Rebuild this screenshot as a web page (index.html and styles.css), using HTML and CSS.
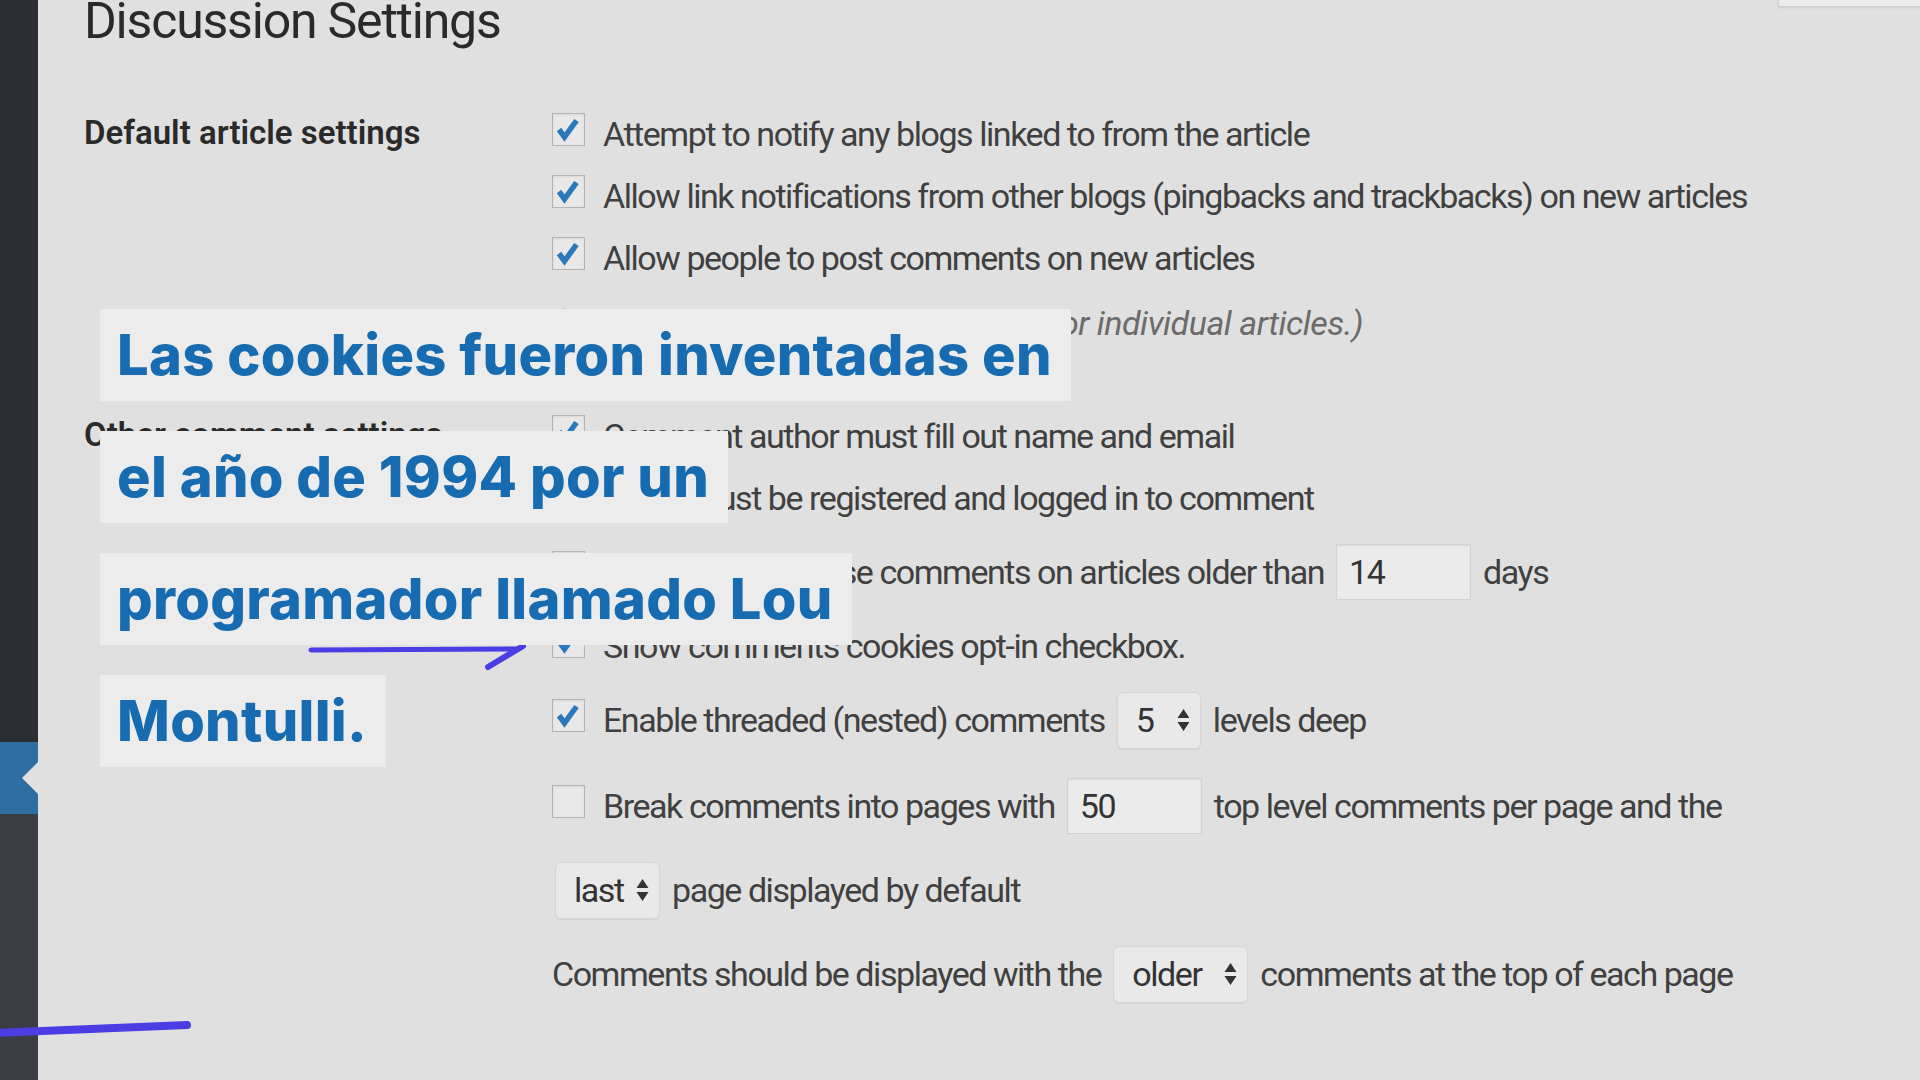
FILE: index.html
```html
<!DOCTYPE html>
<html lang="en">
<head>
    <meta charset="UTF-8">
    <title>Discussion Settings</title>
    <link rel="stylesheet" href="styles.css">
</head>
<body>
    <div class="admin">
        <aside class="sidebar">
            <div class="menu-top"></div>
            <div class="menu-current"></div>
            <div class="menu-rest"></div>
        </aside>

        <main class="wrap">
            <header class="head">
                <h1>Discussion Settings</h1>
                <div class="help-tab"></div>
            </header>

            <section class="group">
                <div class="label">Default article settings</div>
                <div class="fields">
                    <div class="opt"><span class="cb on"><svg width="30" height="30" viewBox="0 0 30 30"><path d="M6 15.5 L11.5 23 L23.5 6.5"/></svg></span>Attempt to notify any blogs linked to from the article</div>
                    <div class="opt"><span class="cb on"><svg width="30" height="30" viewBox="0 0 30 30"><path d="M6 15.5 L11.5 23 L23.5 6.5"/></svg></span>Allow link notifications from other blogs (pingbacks and trackbacks) on new articles</div>
                    <div class="opt"><span class="cb on"><svg width="30" height="30" viewBox="0 0 30 30"><path d="M6 15.5 L11.5 23 L23.5 6.5"/></svg></span>Allow people to post comments on new articles</div>
                    <div class="opt note">(These settings may be overridden for individual articles.)</div>
                </div>
            </section>

            <section class="group">
                <div class="label">Other comment settings</div>
                <div class="fields">
                    <div class="opt"><span class="cb on"><svg width="30" height="30" viewBox="0 0 30 30"><path d="M6 15.5 L11.5 23 L23.5 6.5"/></svg></span>Comment author must fill out name and email</div>
                    <div class="opt"><span class="cb on"><svg width="30" height="30" viewBox="0 0 30 30"><path d="M6 15.5 L11.5 23 L23.5 6.5"/></svg></span>Users must be registered and logged in to comment</div>
                    <div class="opt field"><span class="cb"></span>Automatically close comments on articles older than <span class="input">14</span> days</div>
                    <div class="opt"><span class="cb on"><svg width="30" height="30" viewBox="0 0 30 30"><path d="M6 15.5 L11.5 23 L23.5 6.5"/></svg></span>Show comments cookies opt-in checkbox.</div>
                    <div class="opt field"><span class="cb on"><svg width="30" height="30" viewBox="0 0 30 30"><path d="M6 15.5 L11.5 23 L23.5 6.5"/></svg></span>Enable threaded (nested) comments
                        <span class="select w-depth">5<svg width="13" height="24" viewBox="0 0 13 24"><path d="M0.5 10 L6.5 1 L12.5 10 Z M0.5 14 L12.5 14 L6.5 23 Z"/></svg></span>
                        levels deep</div>
                    <div class="opt field"><span class="cb"></span>Break comments into pages with <span class="input">50</span> top level comments per page and the</div>
                    <div class="opt sub">
                        <span class="select w-last">last<svg width="13" height="24" viewBox="0 0 13 24"><path d="M0.5 10 L6.5 1 L12.5 10 Z M0.5 14 L12.5 14 L6.5 23 Z"/></svg></span>
                        page displayed by default</div>
                    <div class="opt field">Comments should be displayed with the
                        <span class="select w-order">older<svg width="13" height="24" viewBox="0 0 13 24"><path d="M0.5 10 L6.5 1 L12.5 10 Z M0.5 14 L12.5 14 L6.5 23 Z"/></svg></span>
                        comments at the top of each page</div>
                </div>
            </section>
        </main>
    </div>

    <!-- pen marks drawn over the recording -->
    <svg class="ink" width="1920" height="1080" viewBox="0 0 1920 1080">
        <path d="M-5 1033 L187 1025" stroke-width="8"/>
        <path d="M311 650 L518 649" stroke-width="5"/>
        <path d="M523 646 L488 667" stroke-width="6"/>
    </svg>

    <div class="captions">
        <span>Las cookies fueron inventadas en</span>
        <span>el año de 1994 por un</span>
        <span>programador llamado Lou</span>
        <span>Montulli.</span>
    </div>
</body>
</html>
```

FILE: styles.css
```css
* {
    box-sizing: border-box;
}
html, body {
    margin: 0;
    height: 100%;
}
body {
    position: relative;
    overflow: hidden;
    background: #e0e0e0;
    font-family: Roboto, "Liberation Sans", sans-serif;
    color: #404040;
}
.admin {
    display: flex;
    height: 1080px;
}

/* left admin menu, only its edge is in frame */
.sidebar {
    width: 38px;
    flex: none;
    display: flex;
    flex-direction: column;
    background: #3a3d41;
}
.menu-top {
    height: 742px;
    background: #2b2e32;
}
.menu-current {
    height: 72px;
    background: #2f6ea3;
    position: relative;
}
.menu-current::after {
    content: "";
    position: absolute;
    right: 0;
    top: 50%;
    margin-top: -16px;
    border-top: 16px solid transparent;
    border-bottom: 16px solid transparent;
    border-right: 16px solid #e0e0e0;
}
.menu-rest {
    flex: 1;
}

.wrap {
    flex: 1;
    padding-left: 46px;
}
.head {
    display: flex;
    justify-content: space-between;
    align-items: flex-start;
}
.head h1 {
    margin: -4px 0 57px;
    font-size: 50px;
    line-height: 50px;
    font-weight: 400;
    letter-spacing: -1.2px;
    color: #2a2a2a;
}
.help-tab {
    width: 142px;
    height: 7px;
    background: #ececec;
    border-left: 1px solid #cdcdcd;
    border-bottom: 1px solid #cdcdcd;
    box-shadow: 0 1px 2px rgba(0,0,0,0.08);
}

.group {
    display: grid;
    grid-template-columns: 468px 1fr;
}
.group + .group {
    margin-top: 54px;
}
.label {
    margin-top: -1px;
    font-size: 33px;
    font-weight: 600;
    line-height: 62px;
    color: #2a2a2a;
}
.opt {
    height: 62px;
    display: flex;
    align-items: center;
    gap: 12px;
    font-size: 34px;
    letter-spacing: -1.45px;
    white-space: nowrap;
}
.opt.field {
    height: 86px;
}
.opt.sub {
    height: 82px;
}
.note {
    padding-top: 5px;
    font-style: italic;
    letter-spacing: -0.5px;
    color: #6b6b6b;
}

.cb {
    width: 33px;
    height: 33px;
    flex: none;
    margin: 0 6px 9px 0;
    background: #e8e8e8;
    border: 1.5px solid #b3b3b3;
    box-shadow: inset 0 1px 2px rgba(0,0,0,0.08);
}
.cb svg {
    display: block;
}
.cb path {
    fill: none;
    stroke: #2b79ba;
    stroke-width: 5.5;
}

.input {
    width: 135px;
    height: 56px;
    flex: none;
    display: flex;
    align-items: center;
    padding-left: 12px;
    background: #ebebeb;
    border: 1px solid #d2d2d2;
    box-shadow: inset 0 1px 2px rgba(0,0,0,0.07);
    color: #333;
}
.select {
    height: 57px;
    flex: none;
    display: flex;
    align-items: center;
    justify-content: space-between;
    padding: 0 10px 0 18px;
    background: #e9e9e9;
    border: 1px solid #d6d6d6;
    border-radius: 6px;
    box-shadow: 0 1px 1px rgba(0,0,0,0.06);
    color: #333;
}
.select path {
    fill: #333;
}
.w-depth {
    width: 84px;
}
.w-last {
    width: 105px;
    margin-left: 3px;
}
.w-order {
    width: 135px;
}

/* overlays from the video */
.ink {
    position: absolute;
    left: 0;
    top: 0;
    pointer-events: none;
}
.ink path {
    fill: none;
    stroke: #4b3de4;
    stroke-linecap: round;
}
.captions {
    position: absolute;
    left: 100px;
    top: 309px;
    display: flex;
    flex-direction: column;
    align-items: flex-start;
    gap: 30px;
}
.captions span {
    height: 92px;
    display: flex;
    align-items: center;
    padding: 0 19px 0 17px;
    background: #ececec;
    font-family: Inter, "Open Sans", sans-serif;
    font-size: 56px;
    font-weight: 800;
    letter-spacing: 0.3px;
    color: #176bb0;
}
```
